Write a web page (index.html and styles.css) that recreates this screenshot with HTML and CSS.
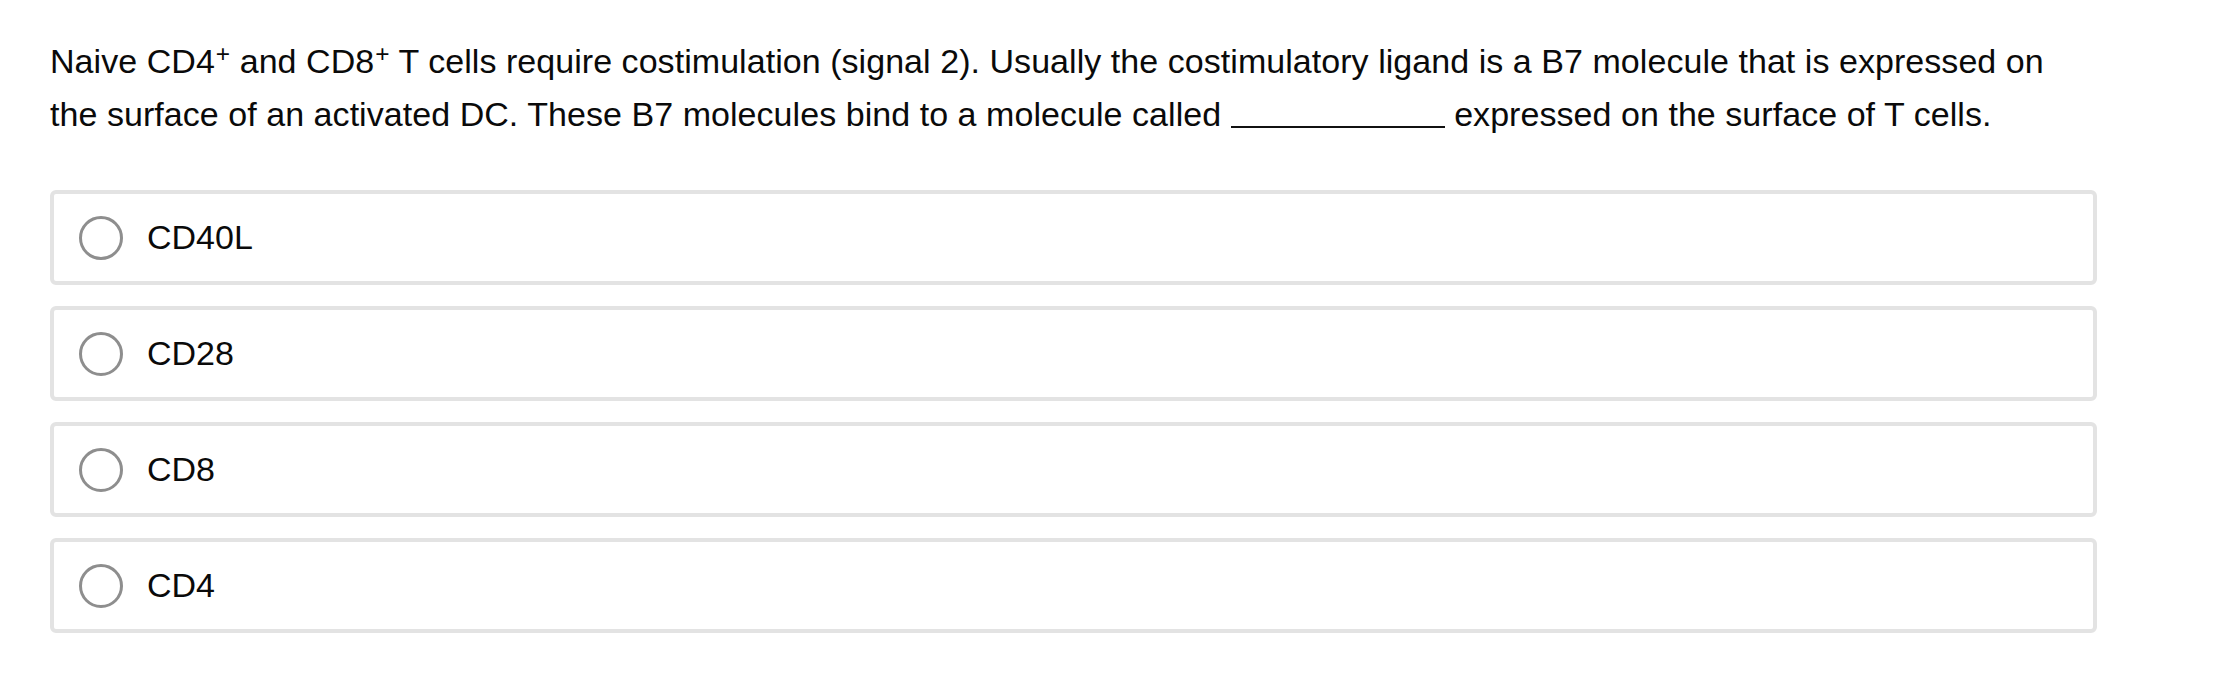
FILE: index.html
```html
<!DOCTYPE html>
<html lang="en">
<head>
  <meta charset="UTF-8">
  <title>Question</title>
  <link rel="stylesheet" href="styles.css">
</head>
<body>

<div class="question">
  <p class="prompt">Naive CD4<sup>+</sup> and CD8<sup>+</sup> T cells require costimulation (signal 2). Usually the costimulatory ligand is a B7 molecule that is expressed on the surface of an activated DC. These B7 molecules bind to a molecule called <span class="blank"></span> expressed on the surface of T cells.</p>

  <div class="answers">
    <label class="answer"><input type="radio" name="ans"><span>CD40L</span></label>
    <label class="answer"><input type="radio" name="ans"><span>CD28</span></label>
    <label class="answer"><input type="radio" name="ans"><span>CD8</span></label>
    <label class="answer"><input type="radio" name="ans"><span>CD4</span></label>
  </div>
</div>

</body>
</html>
```

FILE: styles.css
```css
body {
  font-family: 'Liberation Sans', Arial, sans-serif;
  background-color: #fff;
  color: #0a0a0a;
  margin: 0;
  padding: 0;
}
.question {
  width: 2047px;
  padding: 35px 0 0 50px;
}
.prompt {
  max-width: 2010px;
  margin: 0;
  font-size: 34px;
  line-height: 53px;
  letter-spacing: 0.05px;
}
.prompt sup {
  font-size: 0.72em;
  line-height: 0;
  vertical-align: 11px;
  margin-left: 1px;
}
.blank {
  display: inline-block;
  width: 214px;
  border-bottom: 2px solid #111;
  vertical-align: -2px;
}
.answers {
  display: flex;
  flex-direction: column;
  gap: 21px;
  margin-top: 49px;
}
.answer {
  display: flex;
  align-items: center;
  gap: 24px;
  height: 95px;
  box-sizing: border-box;
  padding-left: 25px;
  border: 4px solid #e3e3e3;
  border-radius: 6px;
  font-size: 34px;
  cursor: pointer;
}
.answer input {
  appearance: none;
  margin: 0;
  width: 44px;
  height: 44px;
  border: 3px solid #8e8e8e;
  border-radius: 50%;
  box-sizing: border-box;
}
```
